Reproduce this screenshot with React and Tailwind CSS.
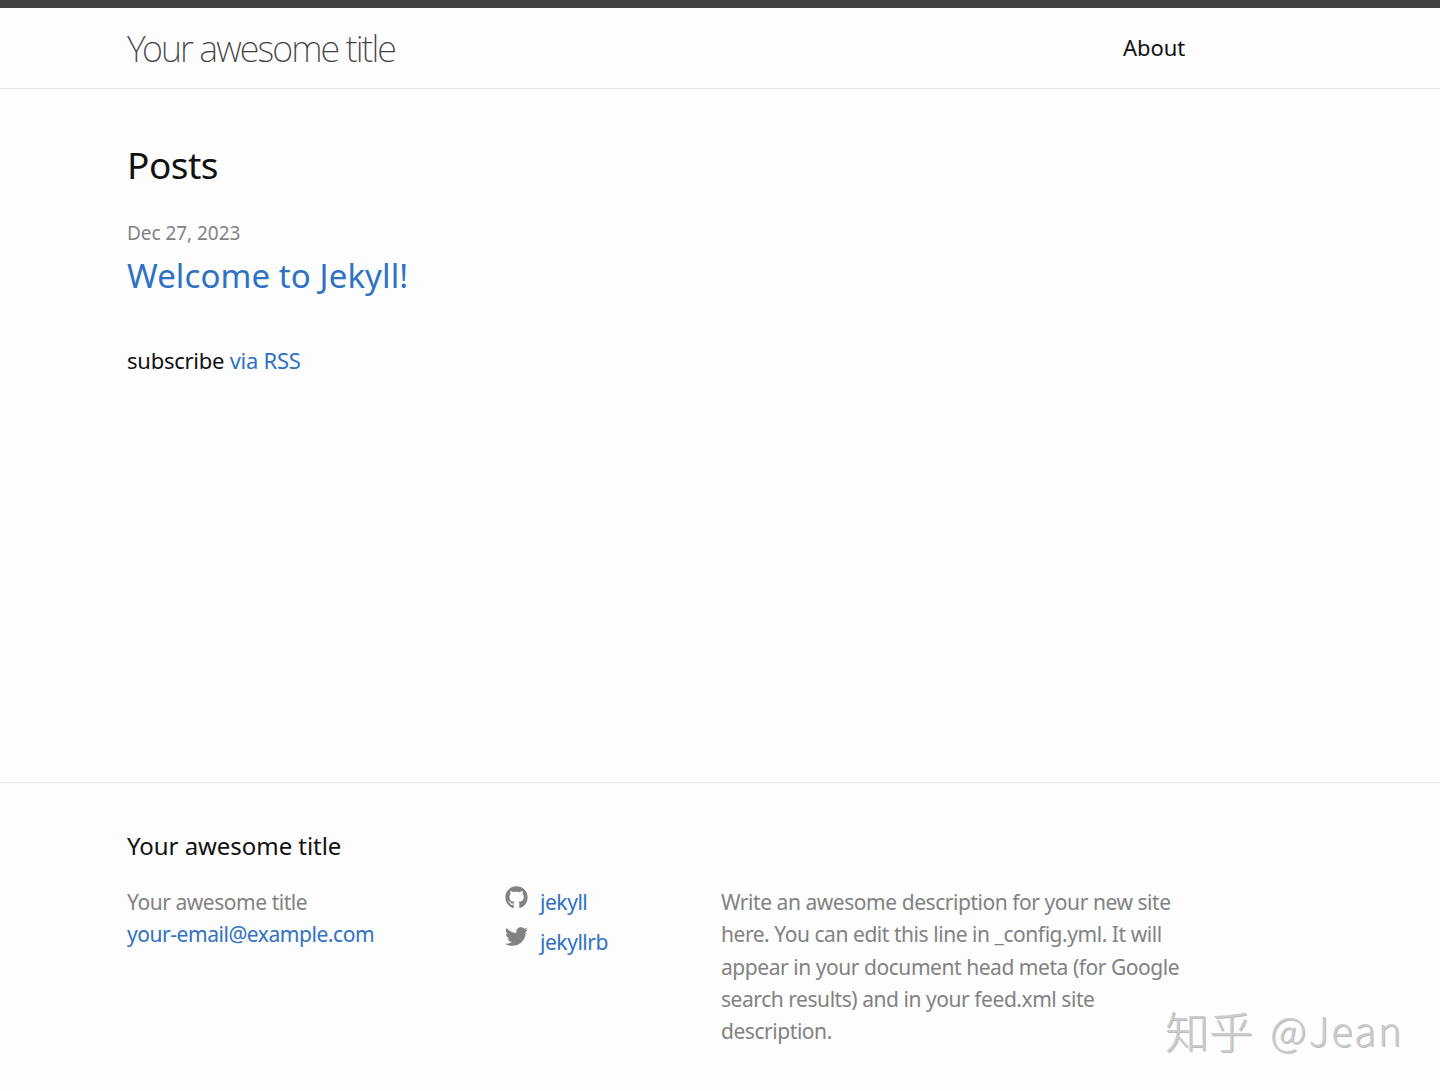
import React from 'react';
import { FaGithub, FaTwitter } from 'react-icons/fa';

export default function App() {
  return (
    <div className="relative min-h-[1091px] bg-[#fdfdfd] text-[#111] font-['Noto_Sans','Open_Sans',sans-serif] overflow-hidden">
      <header className="h-[89px] border-t-[8px] border-b border-t-[#424242] border-b-[#e8e8e8]">
        <div className="flex justify-between w-[1058px] ml-[127px] pt-[16px]">
          <a className="text-[36px] leading-[50px] font-extralight tracking-[-1.9px] text-[#424242]">Your awesome title</a>
          <a className="text-[22px] leading-[46px] tracking-[-0.1px] text-[#111]">About</a>
        </div>
      </header>

      <main className="h-[693px] pl-[127px] pt-[50px]">
        <h1 className="text-[37px] leading-[52px] text-[#111] tracking-[-0.5px]">Posts</h1>
        <div className="mt-[29px] text-[19px] leading-[26px] text-[#828282] tracking-[-0.05px]">Dec 27, 2023</div>
        <h2 className="mt-[7px] text-[33px] leading-[46px] text-[#2f72c4] tracking-[0.1px]">Welcome to Jekyll!</h2>
        <p className="mt-[45px] text-[22px] leading-[32px] tracking-[-0.25px]">
          subscribe <a className="text-[#2f72c4]">via RSS</a>
        </p>
      </main>

      <footer className="border-t border-[#e8e8e8] pl-[127px] pt-[45px]">
        <h2 className="text-[24px] leading-[36px] tracking-[-0.05px] text-[#111]">Your awesome title</h2>
        <div className="flex mt-[22px] text-[21px] leading-[32.25px] tracking-[-0.45px] text-[#828282]">
          <div className="w-[378px]">
            <div>Your awesome title</div>
            <a className="text-[#2f72c4]">your-email@example.com</a>
          </div>
          <div className="w-[216px] text-[#2f72c4]">
            <div className="flex gap-[12px] h-[40px]">
              <FaGithub className="w-[23px] h-[23px] mt-[0px] text-[#828282]" />
              <a>jekyll</a>
            </div>
            <div className="flex gap-[12px] h-[40px]">
              <FaTwitter className="w-[23px] h-[23px] mt-[-1px] text-[#828282]" />
              <a>jekyllrb</a>
            </div>
          </div>
          <p className="w-[462px]">
            Write an awesome description for your new site here. You can edit this line in _config.yml. It will appear in your document head meta (for Google search results) and in your feed.xml site description.
          </p>
        </div>
      </footer>

      <div className="absolute left-[1165px] top-[1001px] flex gap-[17px] items-baseline text-[#cccccc] font-['Noto_Sans_CJK_SC',sans-serif] font-light whitespace-nowrap [text-shadow:1px_1px_0_#bbbbbb]">
        <span className="text-[44px] leading-[58px]">知乎</span>
        <span className="text-[40px] leading-[58px] tracking-[2px] -translate-y-[3px]">@Jean</span>
      </div>
    </div>
  );
}
